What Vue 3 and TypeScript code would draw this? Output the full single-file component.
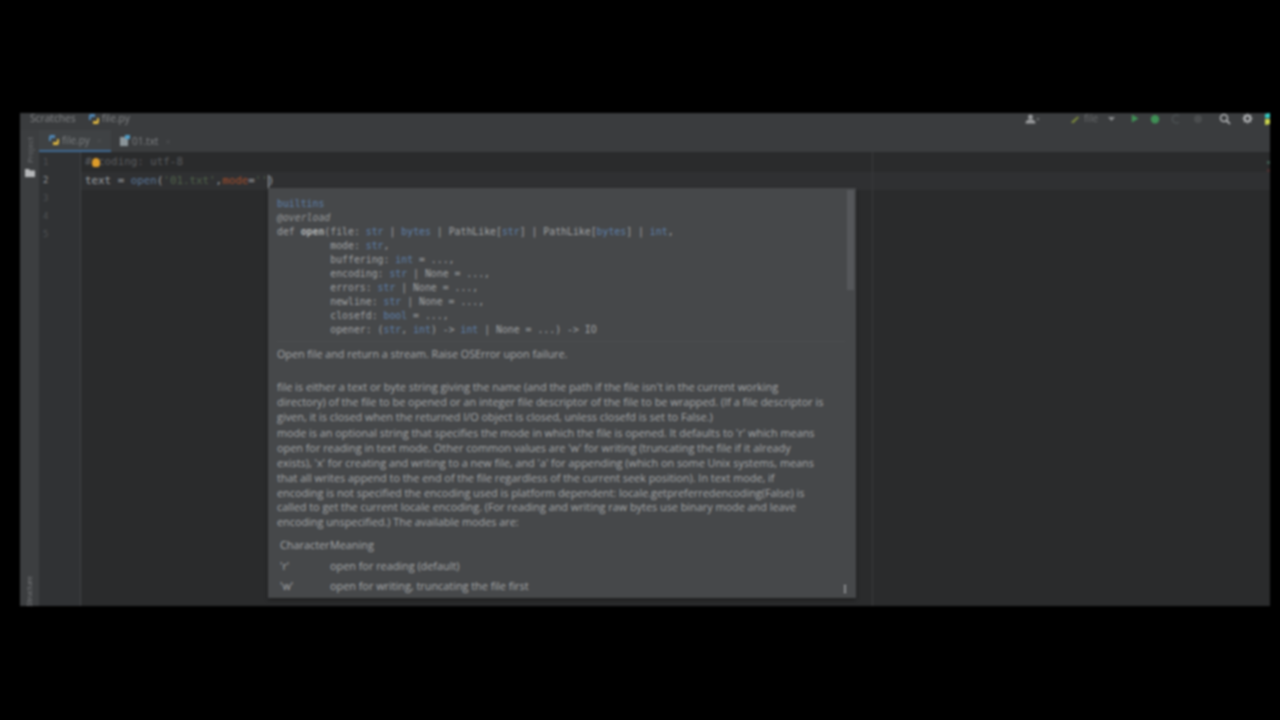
<script setup lang="ts">
type Seg = { t: string; c?: string }
const S = (t: string): Seg => ({ t, c: 'kw' })
const P = (t: string): Seg => ({ t })
const sigLines: Seg[][] = [
  [{ t: 'builtins', c: 'kw' }],
  [{ t: '@overload', c: 'deco' }],
  [{ t: 'def ' }, { t: 'open', c: 'bold' }, { t: '(file: ' }, S('str'), P(' | '), S('bytes'), P(' | PathLike['), S('str'), P('] | PathLike['), S('bytes'), P('] | '), S('int'), P(',')],
  [P('         mode: '), S('str'), P(',')],
  [P('         buffering: '), S('int'), P(' = ...,')],
  [P('         encoding: '), S('str'), P(' | None = ...,')],
  [P('         errors: '), S('str'), P(' | None = ...,')],
  [P('         newline: '), S('str'), P(' | None = ...,')],
  [P('         closefd: '), S('bool'), P(' = ...,')],
  [P('         opener: ('), S('str'), P(', '), S('int'), P(') -> '), S('int'), P(' | None = ...) -> IO')],
]
const para1 = [
  "file is either a text or byte string giving the name (and the path if the file isn't in the current working",
  'directory) of the file to be opened or an integer file descriptor of the file to be wrapped. (If a file descriptor is',
  'given, it is closed when the returned I/O object is closed, unless closefd is set to False.)',
]
const para2 = [
  "mode is an optional string that specifies the mode in which the file is opened. It defaults to 'r' which means",
  "open for reading in text mode. Other common values are 'w' for writing (truncating the file if it already",
  "exists), 'x' for creating and writing to a new file, and 'a' for appending (which on some Unix systems, means",
  'that all writes append to the end of the file regardless of the current seek position). In text mode, if',
  'encoding is not specified the encoding used is platform dependent: locale.getpreferredencoding(False) is',
  'called to get the current locale encoding. (For reading and writing raw bytes use binary mode and leave',
  'encoding unspecified.) The available modes are:',
]
const gutter = [1, 2, 3, 4, 5]
</script>

<template>
  <div class="screen">
    <div class="ide">
      <header class="nav">
        <div class="crumbs">
          <span>Scratches</span>
          <svg class="py" viewBox="0 0 12 12"><path d="M2 1h5v3H3v3H1V3z" fill="#4f86b5" /><path d="M10 11H5V8h4V5h2v4z" fill="#d9b340" /></svg>
          <span>file.py</span>
        </div>
        <div class="tools">
          <svg class="ic user" viewBox="0 0 14 10"><circle cx="5" cy="3" r="2.4" fill="#9a9c9e" /><path d="M0 9.5c0-3 2-4 5-4s5 1 5 4z" fill="#9a9c9e" /><path d="M11 4.5h3l-1.5 2z" fill="#8a8c8e" /></svg>
          <div class="run-cfg">
            <svg class="py small" viewBox="0 0 12 12"><path d="M1 10 9 3l2 1-7 7z" fill="#7c8a3c" /></svg>
            <span>file</span>
            <svg class="caret" viewBox="0 0 7 4"><path d="M0 0h7L3.5 4z" fill="#8c8e90" /></svg>
          </div>
          <svg class="ic play" viewBox="0 0 10 10"><path d="M2 0.5 9.5 5 2 9.5z" fill="#3f8f55" /></svg>
          <svg class="ic bug" viewBox="0 0 10 10"><circle cx="5" cy="5.3" r="4.2" fill="#3f8f55" /></svg>
          <svg class="ic dim" viewBox="0 0 10 10"><path d="M8 2a4 4 0 1 0 0 6" fill="none" stroke="#4b5052" stroke-width="1.6" /></svg>
          <svg class="ic dim last" viewBox="0 0 10 10"><circle cx="5" cy="5" r="4" fill="#4b4d4f" /></svg>
          <svg class="ic search" viewBox="0 0 12 12"><circle cx="5" cy="5" r="3.5" fill="none" stroke="#b4b6b8" stroke-width="1.5" /><path d="m7.6 7.6 3.4 3.4" stroke="#b4b6b8" stroke-width="1.7" /></svg>
          <svg class="ic gear" viewBox="0 0 12 12"><circle cx="6" cy="6" r="3.1" fill="none" stroke="#b4b6b8" stroke-width="2" /><path d="M6 .6v2M6 9.4v2M.6 6h2M9.4 6h2M2.2 2.2l1.4 1.4M8.4 8.4l1.4 1.4M9.8 2.2 8.4 3.6M3.6 8.4 2.2 9.8" stroke="#b4b6b8" stroke-width="1.5" /></svg>
          <svg class="ic logo" viewBox="0 0 5 12"><path d="M0 1 5 0v5H0z" fill="#35c9c0" /><path d="M0 6h5v5l-5 1z" fill="#c9d34e" /></svg>
        </div>
      </header>

      <div class="body">
        <aside class="stripe">
          <div class="stripe-top">
            <span class="vert">Project</span>
            <svg class="folder" viewBox="0 0 10 8"><path d="M0 0h4l1 1.5h5V8H0z" fill="#b5b7b9" /></svg>
          </div>
          <span class="vert structure">Structure</span>
        </aside>
        <div class="main">
          <nav class="tabs">
            <div class="tab active">
              <svg class="py" viewBox="0 0 12 12"><path d="M2 1h5v3H3v3H1V3z" fill="#4f86b5" /><path d="M10 11H5V8h4V5h2v4z" fill="#d9b340" /></svg>
              <span>file.py</span><span class="x">×</span>
            </div>
            <div class="tab second">
              <svg class="py" viewBox="0 0 12 12"><path d="M2 2h6l2 2v7H2z" fill="#8b9499" /><path d="M7 0h5v4H7z" fill="#4f9bc4" /></svg>
              <span>01.txt</span><span class="x">×</span>
            </div>
          </nav>
          <div class="editor">
            <div class="gutter">
              <div v-for="n in gutter" :key="n" class="ln" :class="{ cur: n === 2 }">{{ n }}</div>
            </div>
            <div class="code">
              <div class="code-line">
                <span class="comment"># coding: utf-8</span>
                <span class="bulb"></span>
              </div>
              <div class="code-line current">
                <span class="plain">text = </span><span class="fn">open</span><span class="plain">(</span><span class="str">'01.txt'</span><span class="plain">,</span><span class="param">mode</span><span class="plain">=</span><span class="str">''</span><i class="cursor"></i><span class="plain">)</span>
              </div>
              <div class="margin-line"></div>
            </div>
            <div class="marks"><i class="m1"></i><i class="m2"></i></div>

            <section class="popup">
              <div class="scroll"></div>
              <div class="sig">
                <div v-for="(line, i) in sigLines" :key="i" class="sig-line">
                  <span v-for="(seg, j) in line" :key="j" :class="seg.c">{{ seg.t }}</span>
                </div>
              </div>
              <div class="rule"></div>
              <p class="lead">Open file and return a stream. Raise OSError upon failure.</p>
              <div class="para p1">
                <div v-for="l in para1" :key="l">{{ l }}</div>
              </div>
              <div class="para p2">
                <div v-for="l in para2" :key="l">{{ l }}</div>
              </div>
              <div class="modes">
                <div class="mode head"><span class="k">Character</span><span>Meaning</span></div>
                <div class="mode r1"><span class="k">'r'</span><span>open for reading (default)</span></div>
                <div class="mode r2"><span class="k">'w'</span><span>open for writing, truncating the file first</span></div>
              </div>
              <div class="dots"><i></i><i></i><i></i></div>
            </section>
          </div>
        </div>
      </div>
    </div>
  </div>
</template>

<style>
html, body { margin: 0; background: #000; }
</style>

<style scoped>
.screen {
  width: 1280px;
  height: 720px;
  background: #000;
  overflow: hidden;
  padding: 113px 10px 114px 20px;
  box-sizing: border-box;
}
.ide {
  height: 493px;
  display: flex;
  flex-direction: column;
  background: #3a3c3e;
  color: #a4a6a8;
  font-family: "Open Sans", "Noto Sans", sans-serif;
  filter: blur(0.8px);
}
.nav {
  height: 17px;
  flex: none;
  display: flex;
  align-items: flex-start;
  justify-content: space-between;
  background: #3a3c3e;
  font-size: 10.2px;
  line-height: 11px;
  color: #828486;
  padding: 0 0 0 10px;
  box-sizing: border-box;
}
.crumbs { display: flex; align-items: center; gap: 2px; height: 11px; }
.crumbs .py { margin-left: 10px; }
.py { width: 12px; height: 12px; flex: none; }
.py.small { width: 10px; height: 10px; }
.tools { display: flex; align-items: center; height: 11px; }
.ic { flex: none; }
.user { width: 15px; height: 10px; margin-right: 24px; }
.run-cfg {
  display: flex;
  align-items: center;
  gap: 4px;
  width: 66px;
  color: #6a6c6e;
  font-size: 10px;
  padding-left: 6px;
  box-sizing: border-box;
}
.caret { width: 7px; height: 4px; margin-left: 6px; }
.play { width: 9px; height: 9px; margin-right: 11px; }
.bug { width: 10px; height: 10px; margin-right: 11px; }
.dim { width: 10px; height: 10px; margin-right: 12px; }
.dim.last { margin-right: 0; }
.search { width: 12px; height: 12px; margin: 0 11px 0 16px; }
.gear { width: 11px; height: 11px; margin-right: 12px; }
.logo { width: 5px; height: 12px; }

.body { flex: 1; display: flex; min-height: 0; }
.stripe {
  width: 19px;
  flex: none;
  background: #3c3e40;
  display: flex;
  flex-direction: column;
  justify-content: space-between;
  align-items: center;
  padding-top: 7px;
  box-sizing: border-box;
}
.stripe-top { display: flex; flex-direction: column; align-items: center; gap: 6px; }
.vert {
  writing-mode: vertical-rl;
  transform: rotate(180deg);
  font-size: 8px;
  color: #6e7073;
}
.structure { color: #808284; font-size: 7px; }
.folder { width: 10px; height: 8px; }
.main { flex: 1; min-width: 0; display: flex; flex-direction: column; }
.tabs {
  height: 22px;
  flex: none;
  display: flex;
  background: #3a3c3e;
  font-size: 10px;
  color: #7e8083;
}
.tab {
  display: flex;
  align-items: center;
  gap: 2px;
  padding: 0 0 0 9px;
  width: 70px;
  box-sizing: border-box;
}
.tab.second { padding-left: 7px; }
.tab.active {
  width: 72px;
  border-bottom: 2px solid #3f6a94;
  background: #3f4244;
}
.x { color: #505254; font-size: 9px; margin-left: 5px; }

.editor {
  flex: 1;
  min-height: 0;
  display: flex;
  position: relative;
  background: #2a2b2c;
}
.gutter {
  width: 41px;
  flex: none;
  background: #303234;
  border-right: 1px solid #414345;
  padding-top: 1px;
  font-family: "DejaVu Sans Mono", monospace;
  font-size: 9px;
  color: #505254;
}
.ln { height: 18.1px; line-height: 18px; padding-left: 4px; }
.ln.cur { color: #96989a; }
.code {
  flex: 1;
  position: relative;
  padding-top: 1px;
  font-family: "DejaVu Sans Mono", monospace;
  font-size: 10.85px;
}
.code-line {
  height: 18.5px;
  line-height: 18px;
  padding-left: 4px;
  white-space: pre;
  position: relative;
}
.code-line.current { background: #2f3032; }
.cursor {
  display: inline-block;
  width: 1px;
  height: 13px;
  margin-right: -1px;
  vertical-align: -4px;
  background: #a8aaac;
}
.comment { color: #5a5c5f; }
.bulb {
  position: absolute;
  left: 11px;
  top: 5px;
  width: 8px;
  height: 9px;
  border-radius: 50% 50% 40% 40%;
  background: #dd9c2a;
}
.plain { color: #a0a4a8; }
.fn { color: #5a7698; }
.str { color: #50624a; }
.param { color: #a04e2c; }
.margin-line {
  position: absolute;
  top: 0;
  bottom: 0;
  left: 791px;
  width: 1px;
  background: #393a3c;
}
.marks { width: 0; position: relative; }
.marks i { position: absolute; display: block; width: 3px; height: 3px; right: 0; }
.marks .m1 { top: 9px; background: #3f5a50; }
.marks .m2 { top: 17px; background: #4a3030; }

.popup {
  position: absolute;
  left: 229px;
  top: 36px;
  width: 588px;
  height: 410px;
  background: #46484a;
  box-shadow: 0 2px 4px rgba(0, 0, 0, 0.35);
  padding: 9px 0 0 9px;
  box-sizing: border-box;
  z-index: 2;
  overflow: hidden;
}
.scroll {
  position: absolute;
  right: 2px;
  top: 2px;
  width: 7px;
  height: 100px;
  background: #55575a;
}
.sig {
  font-family: "DejaVu Sans Mono", monospace;
  font-size: 9.83px;
  color: #a2a4a6;
  white-space: pre;
}
.sig-line { height: 14px; line-height: 14px; }
.kw { color: #5f80aa; }
.deco { color: #96989a; font-style: italic; }
.bold { font-weight: 700; color: #b0b2b4; }
.rule { height: 1px; background: #4c4e50; margin: 4px 0 0; width: 568px; }
.lead, .para, .modes {
  font-family: "Open Sans", "Noto Sans", sans-serif;
  font-size: 10.85px;
  color: #a6a8aa;
  white-space: nowrap;
}
.lead { margin: 5px 0 0; line-height: 14px; font-size: 10.75px; }
.para div { height: 14.8px; line-height: 14.8px; }
.p1 { margin-top: 19px; font-size: 10.9px; }
.p2 { margin-top: 2px; }
.modes { padding-left: 3px; margin-top: 8px; }
.mode { display: flex; line-height: 14px; }
.k { width: 50px; flex: none; }
.r1 { margin-top: 7px; }
.r2 { margin-top: 6px; }
.dots {
  position: absolute;
  right: 10px;
  bottom: 5px;
  display: flex;
  flex-direction: column;
  gap: 1px;
}
.dots i { display: block; width: 2px; height: 2px; background: #a8aaac; }
</style>
